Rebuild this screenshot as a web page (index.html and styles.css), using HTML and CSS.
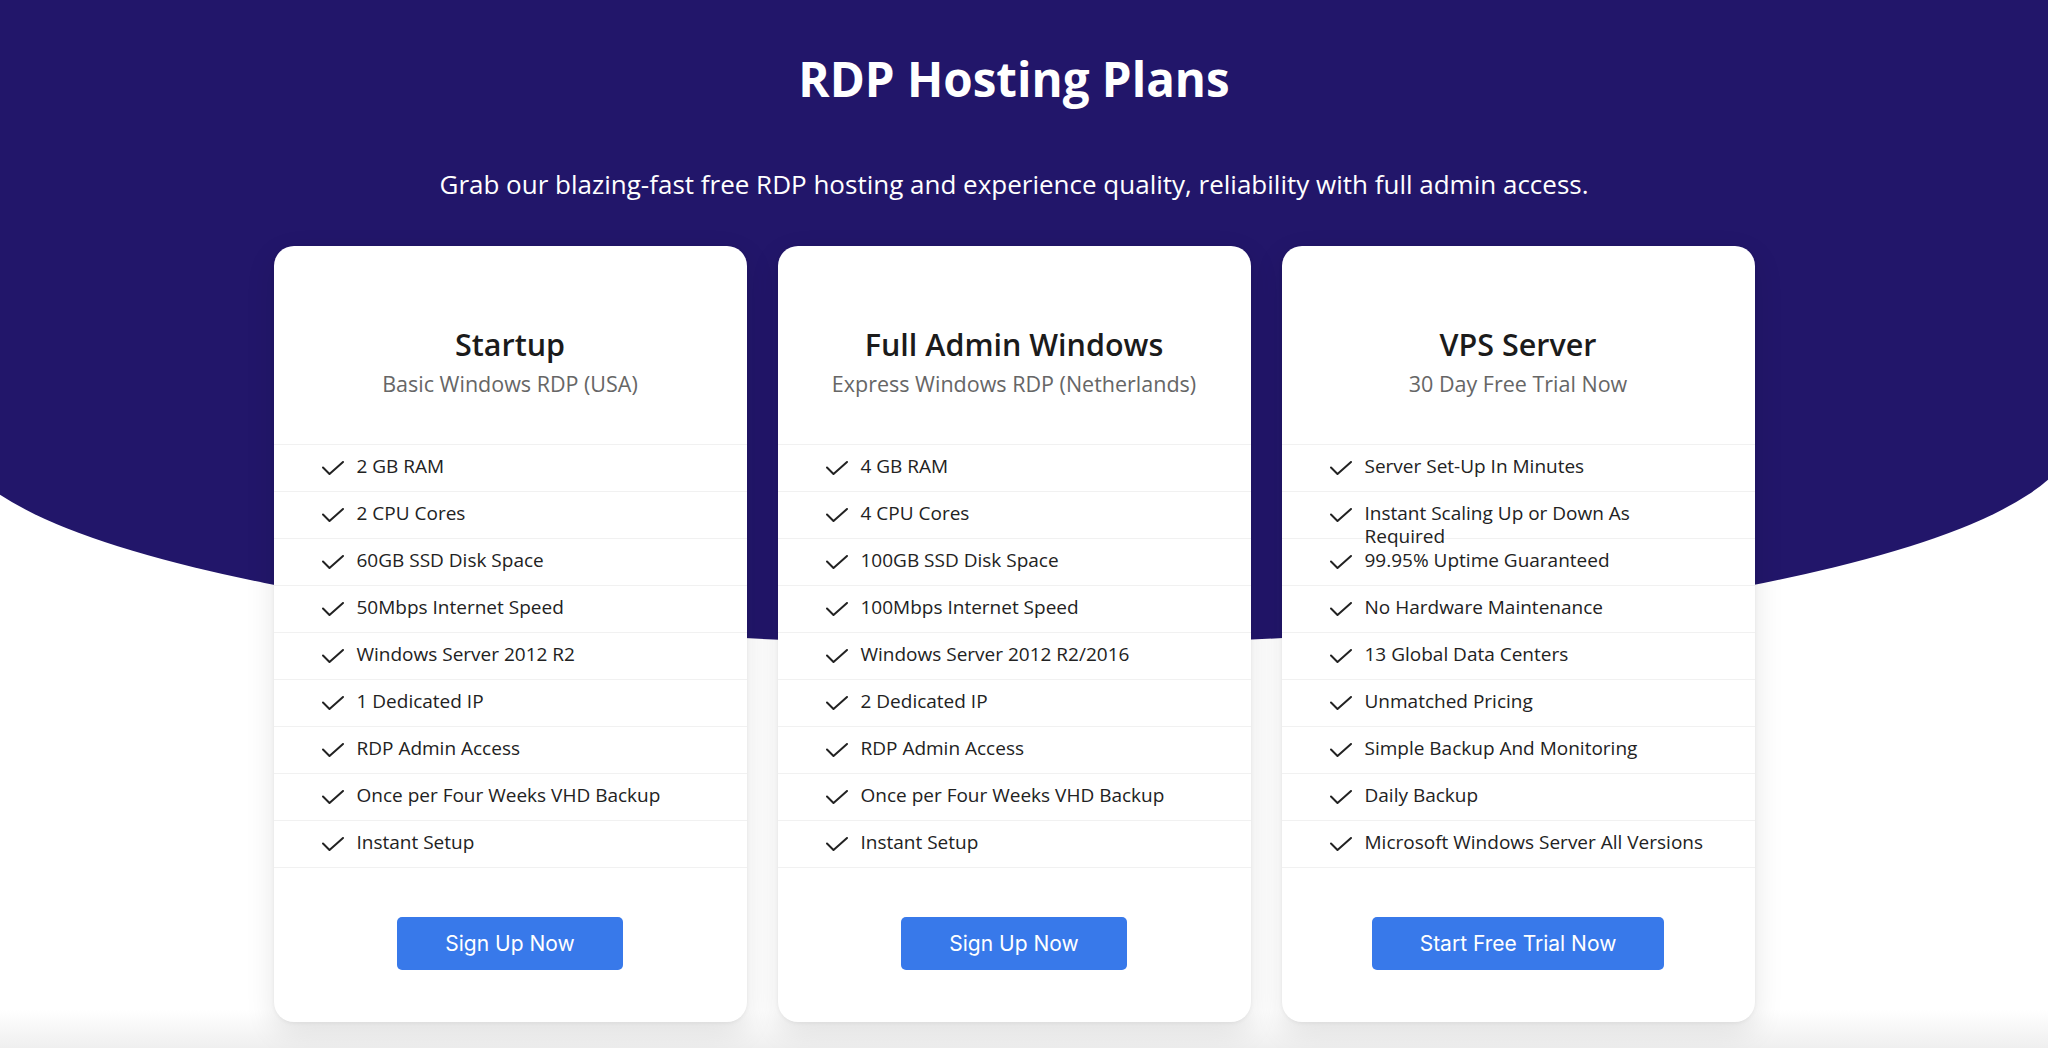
FILE: index.html
```html
<!DOCTYPE html>
<html lang="en">
<head>
<meta charset="utf-8">
<title>RDP Hosting Plans</title>
<link rel="stylesheet" href="styles.css">
</head>
<body>
<section class="pricing">
  <div class="pricing-shape" aria-hidden="true"></div>
  <div class="pricing-inner">
    <h1 class="pricing-title">RDP Hosting Plans</h1>
    <p class="pricing-lead">Grab our blazing-fast free RDP hosting and experience quality, reliability with full admin access.</p>

    <div class="plans">
      <article class="plan">
        <header class="plan-head">
          <h2 class="plan-name">Startup</h2>
          <p class="plan-sub">Basic Windows RDP (USA)</p>
        </header>
        <ul class="plan-features">
          <li><svg class="check" viewBox="0 0 22 14"><polyline points="1,6.5 7.5,13 21,1"/></svg><span>2 GB RAM</span></li>
          <li><svg class="check" viewBox="0 0 22 14"><polyline points="1,6.5 7.5,13 21,1"/></svg><span>2 CPU Cores</span></li>
          <li><svg class="check" viewBox="0 0 22 14"><polyline points="1,6.5 7.5,13 21,1"/></svg><span>60GB SSD Disk Space</span></li>
          <li><svg class="check" viewBox="0 0 22 14"><polyline points="1,6.5 7.5,13 21,1"/></svg><span>50Mbps Internet Speed</span></li>
          <li><svg class="check" viewBox="0 0 22 14"><polyline points="1,6.5 7.5,13 21,1"/></svg><span>Windows Server 2012 R2</span></li>
          <li><svg class="check" viewBox="0 0 22 14"><polyline points="1,6.5 7.5,13 21,1"/></svg><span>1 Dedicated IP</span></li>
          <li><svg class="check" viewBox="0 0 22 14"><polyline points="1,6.5 7.5,13 21,1"/></svg><span>RDP Admin Access</span></li>
          <li><svg class="check" viewBox="0 0 22 14"><polyline points="1,6.5 7.5,13 21,1"/></svg><span>Once per Four Weeks VHD Backup</span></li>
          <li><svg class="check" viewBox="0 0 22 14"><polyline points="1,6.5 7.5,13 21,1"/></svg><span>Instant Setup</span></li>
        </ul>
        <div class="plan-action"><a class="btn" href="#">Sign Up Now</a></div>
      </article>

      <article class="plan">
        <header class="plan-head">
          <h2 class="plan-name">Full Admin Windows</h2>
          <p class="plan-sub">Express Windows RDP (Netherlands)</p>
        </header>
        <ul class="plan-features">
          <li><svg class="check" viewBox="0 0 22 14"><polyline points="1,6.5 7.5,13 21,1"/></svg><span>4 GB RAM</span></li>
          <li><svg class="check" viewBox="0 0 22 14"><polyline points="1,6.5 7.5,13 21,1"/></svg><span>4 CPU Cores</span></li>
          <li><svg class="check" viewBox="0 0 22 14"><polyline points="1,6.5 7.5,13 21,1"/></svg><span>100GB SSD Disk Space</span></li>
          <li><svg class="check" viewBox="0 0 22 14"><polyline points="1,6.5 7.5,13 21,1"/></svg><span>100Mbps Internet Speed</span></li>
          <li><svg class="check" viewBox="0 0 22 14"><polyline points="1,6.5 7.5,13 21,1"/></svg><span>Windows Server 2012 R2/2016</span></li>
          <li><svg class="check" viewBox="0 0 22 14"><polyline points="1,6.5 7.5,13 21,1"/></svg><span>2 Dedicated IP</span></li>
          <li><svg class="check" viewBox="0 0 22 14"><polyline points="1,6.5 7.5,13 21,1"/></svg><span>RDP Admin Access</span></li>
          <li><svg class="check" viewBox="0 0 22 14"><polyline points="1,6.5 7.5,13 21,1"/></svg><span>Once per Four Weeks VHD Backup</span></li>
          <li><svg class="check" viewBox="0 0 22 14"><polyline points="1,6.5 7.5,13 21,1"/></svg><span>Instant Setup</span></li>
        </ul>
        <div class="plan-action"><a class="btn" href="#">Sign Up Now</a></div>
      </article>

      <article class="plan">
        <header class="plan-head">
          <h2 class="plan-name">VPS Server</h2>
          <p class="plan-sub">30 Day Free Trial Now</p>
        </header>
        <ul class="plan-features">
          <li><svg class="check" viewBox="0 0 22 14"><polyline points="1,6.5 7.5,13 21,1"/></svg><span>Server Set-Up In Minutes</span></li>
          <li><svg class="check" viewBox="0 0 22 14"><polyline points="1,6.5 7.5,13 21,1"/></svg><span>Instant Scaling Up or Down As Required</span></li>
          <li><svg class="check" viewBox="0 0 22 14"><polyline points="1,6.5 7.5,13 21,1"/></svg><span>99.95% Uptime Guaranteed</span></li>
          <li><svg class="check" viewBox="0 0 22 14"><polyline points="1,6.5 7.5,13 21,1"/></svg><span>No Hardware Maintenance</span></li>
          <li><svg class="check" viewBox="0 0 22 14"><polyline points="1,6.5 7.5,13 21,1"/></svg><span>13 Global Data Centers</span></li>
          <li><svg class="check" viewBox="0 0 22 14"><polyline points="1,6.5 7.5,13 21,1"/></svg><span>Unmatched Pricing</span></li>
          <li><svg class="check" viewBox="0 0 22 14"><polyline points="1,6.5 7.5,13 21,1"/></svg><span>Simple Backup And Monitoring</span></li>
          <li><svg class="check" viewBox="0 0 22 14"><polyline points="1,6.5 7.5,13 21,1"/></svg><span>Daily Backup</span></li>
          <li><svg class="check" viewBox="0 0 22 14"><polyline points="1,6.5 7.5,13 21,1"/></svg><span>Microsoft Windows Server All Versions</span></li>
        </ul>
        <div class="plan-action"><a class="btn" href="#">Start Free Trial Now</a></div>
      </article>
    </div>
  </div>
</section>
<div class="page-fade"></div>
</body>
</html>
```

FILE: styles.css
```css
* {
  box-sizing: border-box;
}

html, body {
  margin: 0;
  padding: 0;
  background: #ffffff;
}

body {
  font-family: "Open Sans", "Noto Sans", sans-serif;
  color: #222222;
  overflow: hidden;
}

/* ---------- section with the curved purple backdrop ---------- */
.pricing {
  position: relative;
  padding-right: 20px;
}

.pricing-shape {
  position: absolute;
  top: 0;
  left: -46px;
  width: 2120px;
  height: 645px;
  background: #22166a;
  border-bottom-left-radius: 1060px 212px;
  border-bottom-right-radius: 1060px 212px;
}

.pricing-inner {
  position: relative;
  display: flex;
  flex-direction: column;
  align-items: center;
  padding-top: 52px;
}

.pricing-title {
  margin: 0;
  font-size: 47.5px;
  line-height: 54px;
  font-weight: 700;
  color: #ffffff;
}

.pricing-lead {
  margin: 60px 0 0;
  font-size: 26px;
  line-height: 36px;
  color: #ffffff;
}

/* ---------- plan cards ---------- */
.plans {
  display: flex;
  gap: 31px;
  margin-top: 44px;
}

.plan {
  width: 473px;
  background: #ffffff;
  border-radius: 20px;
  box-shadow: 0 10px 30px rgba(0, 0, 0, 0.10), 0 1px 4px rgba(0, 0, 0, 0.06);
  padding: 78px 0 52px;
  display: flex;
  flex-direction: column;
}

.plan-head {
  text-align: center;
}

.plan-name {
  margin: 0;
  font-size: 30.5px;
  line-height: 40px;
  font-weight: 650;
  color: #1b1b1b;
}

.plan-sub {
  margin: 5px 0 0;
  font-size: 21.5px;
  line-height: 30px;
  color: #666666;
}

.plan-features {
  list-style: none;
  margin: 45px 0 0;
  padding: 0;
  border-bottom: 1px solid #f1f1f1;
}

.plan-features li {
  height: 47px;
  border-top: 1px solid #f1f1f1;
  display: flex;
  align-items: flex-start;
  padding: 10px 48px 0 48px;
  font-size: 19px;
  line-height: 23px;
  color: #222222;
}

.check {
  flex: none;
  width: 22px;
  height: 14px;
  margin: 6px 13px 0 0;
  fill: none;
  stroke: #222222;
  stroke-width: 2;
  stroke-linecap: round;
  stroke-linejoin: round;
}

.plan-action {
  display: flex;
  justify-content: center;
  margin-top: 49px;
}

.btn {
  display: inline-flex;
  align-items: center;
  height: 53px;
  padding: 0 48px;
  background: #3879ea;
  border-radius: 5px;
  color: #ffffff;
  font-family: Inter, "Liberation Sans", sans-serif;
  font-size: 21px;
  text-decoration: none;
}

/* soft grey fade at the foot of the page */
.page-fade {
  height: 40px;
  margin-top: -12px;
  background: linear-gradient(#ffffff, #eeeeee);
}
```
